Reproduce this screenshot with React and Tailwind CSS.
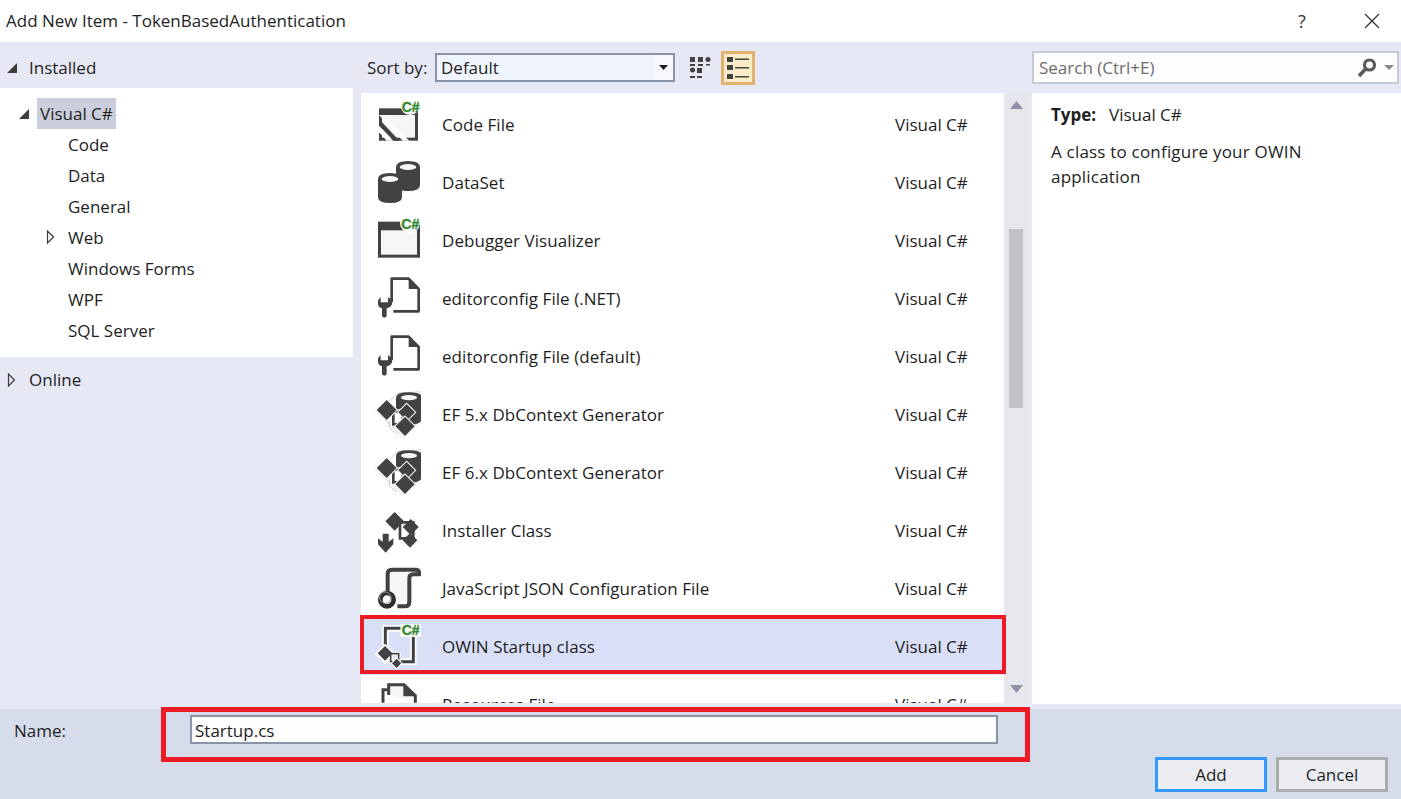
import React from 'react';

const font = { fontFamily: '"Open Sans", "Noto Sans", sans-serif' };

const items = [
  { name: 'Code File', icon: 'code' },
  { name: 'DataSet', icon: 'dataset' },
  { name: 'Debugger Visualizer', icon: 'debugger' },
  { name: 'editorconfig File (.NET)', icon: 'editor' },
  { name: 'editorconfig File (default)', icon: 'editor' },
  { name: 'EF 5.x DbContext Generator', icon: 'ef' },
  { name: 'EF 6.x DbContext Generator', icon: 'ef' },
  { name: 'Installer Class', icon: 'installer' },
  { name: 'JavaScript JSON Configuration File', icon: 'json' },
  { name: 'OWIN Startup class', icon: 'owin', selected: true },
  { name: 'Resources File', icon: 'resources' },
];

const treeItems = ['Code', 'Data', 'General', 'Web', 'Windows Forms', 'WPF', 'SQL Server'];

const dark = '#424242';
const light = '#f6f6f6';

const CSharp = ({ x, y }) => (
  <text x={x} y={y} fontFamily="Liberation Sans" fontWeight="bold" fontSize="42" fill="#388a34" stroke="#388a34" strokeWidth="1.2">C#</text>
);

const Diamond = ({ cx, cy, r, halo }) => (
  <polygon
    points={`${cx},${cy - r} ${cx + r},${cy} ${cx},${cy + r} ${cx - r},${cy}`}
    fill={dark}
    stroke={halo ? '#ffffff' : 'none'}
    strokeWidth={halo ? 6 : 0}
    paintOrder="stroke"
  />
);

const Wrench = () => (
  <path
    d="M54 106 L54 94 L62 84 L62 100 L84 100 L84 84 L96 94 L96 106 Q92 116 80 118 L80 142 Q73 150 66 142 L66 118 Q56 116 54 106 Z"
    fill={dark}
  />
);

const ItemIcon = ({ type }) => {
  let body = null;
  if (type === 'code') {
    body = (
      <>
        <rect x="57" y="40" width="117" height="97" fill={dark} />
        <rect x="66" y="60" width="99" height="68" fill={light} />
        <polygon points="57,60 66,60 148,137 128,137" fill="#ffffff" />
        <polygon points="57,72 118,137 100,137 57,92" fill={dark} />
        <polygon points="57,92 100,137 80,137 57,112" fill="#ffffff" />
        <circle cx="150" cy="32" r="28" fill="#ffffff" />
        <CSharp x={125} y={52} />
      </>
    );
  } else if (type === 'dataset') {
    body = (
      <>
        <path d="M108 42 Q108 24 144 24 Q180 24 180 42 L180 96 Q180 114 144 114 Q125 114 120 108 L108 60 Z" fill={dark} />
        <ellipse cx="144" cy="42" rx="25" ry="9" fill={light} />
        <path d="M54 78 Q54 60 90 60 Q126 60 126 78 L126 132 Q126 150 90 150 Q54 150 54 132 Z" fill={dark} />
        <ellipse cx="90" cy="78" rx="25" ry="9" fill={light} />
      </>
    );
  } else if (type === 'debugger') {
    body = (
      <>
        <rect x="54" y="32" width="126" height="108" fill={dark} />
        <rect x="63" y="58" width="108" height="73" fill={light} />
        <circle cx="150" cy="36" r="30" fill="#ffffff" />
        <CSharp x={124} y={54} />
      </>
    );
  } else if (type === 'editor') {
    body = (
      <>
        <path d="M95 100 L95 29 L146 29 L176 60 L176 127 L100 127" fill="none" stroke={dark} strokeWidth="8" strokeLinejoin="round" />
        <polygon points="146,29 146,60 176,60" fill={dark} />
        <Wrench />
      </>
    );
  } else if (type === 'ef') {
    body = (
      <>
        <path d="M96 42 L112 24 L186 20 L188 100 L132 156 L104 134 L46 76 Z" fill="#ffffff" stroke="#d8d8d8" strokeWidth="3" />
        <path d="M108 38 Q108 22 147 22 Q186 22 186 38 L186 100 Q186 116 156 120 L108 70 Z" fill={dark} />
        <ellipse cx="147" cy="38" rx="24" ry="8" fill={light} />
        <path d="M100 80 L128 80 L128 118 L100 118 Z" fill="none" stroke="#ffffff" strokeWidth="14" />
        <path d="M100 80 L128 80 L128 118 L100 118 Z" fill="none" stroke={dark} strokeWidth="8" />
        <Diamond cx={80} cy={75} r={30} halo />
        <Diamond cx={140} cy={82} r={25} halo />
        <Diamond cx={135} cy={124} r={29} halo />
        <path d="M88 106 L88 128 L110 148" fill="none" stroke="#c8c8c8" strokeWidth="3" />
      </>
    );
  } else if (type === 'installer') {
    body = (
      <>
        <path d="M120 64 L160 64 L160 112 L120 112 Z" fill="none" stroke={dark} strokeWidth="8" />
        <Diamond cx={104} cy={61} r={28} />
        <Diamond cx={152} cy={78} r={24} />
        <Diamond cx={150} cy={118} r={22} />
        <polygon points="68,98 86,98 86,122 100,112 100,130 77,155 54,130 54,112 68,122" fill={dark} />
      </>
    );
  } else if (type === 'json') {
    body = (
      <>
        <rect x="88" y="36" width="56" height="96" fill={light} />
        <path d="M83 102 L83 44 Q83 32 96 32 L168 32 Q178 32 178 46 L160 46 Q148 46 148 58 L148 128 Q148 142 134 142 L112 142" fill="none" stroke={dark} strokeWidth="12" strokeLinejoin="round" />
        <circle cx="81" cy="122" r="20" fill="#ffffff" stroke="#2e2e2e" strokeWidth="14" />
        <circle cx="76" cy="116" r="17" fill="none" stroke="#9a9a9a" strokeWidth="3" />
      </>
    );
  } else if (type === 'owin') {
    body = (
      <>
        <path d="M76 90 L76 34 L160 34 L160 134 L100 134" fill="none" stroke="#ffffff" strokeWidth="20" />
        <path d="M76 88 L76 34 L122 34 M160 60 L160 134 L112 134" fill="none" stroke={dark} strokeWidth="9" />
        <rect x="122" y="21" width="66" height="38" fill="#ffffff" />
        <CSharp x={125} y={54} />
        <polygon points="75,80 106,110 76,142 44,110" fill="#ffffff" />
        <rect x="92" y="110" width="24" height="24" fill="none" stroke="#ffffff" strokeWidth="11" />
        <rect x="92" y="110" width="24" height="24" fill="none" stroke={dark} strokeWidth="5" />
        <Diamond cx={75} cy={109} r={22} />
        <Diamond cx={110} cy={139} r={14} halo />
      </>
    );
  } else if (type === 'resources') {
    body = (
      <>
        <path d="M69 83 L69 44 L88 44" fill="none" stroke={dark} strokeWidth="9" />
        <path d="M86 60 L86 29 L132 29 L166 62 L166 83" fill={light} stroke={dark} strokeWidth="9" />
        <polygon points="130,29 130,64 166,64" fill={dark} />
      </>
    );
  }
  return (
    <svg width="60" height="58" viewBox="3 0 180 174" className="shrink-0">
      {body}
    </svg>
  );
};

const Triangle = ({ open, className }) => (
  <svg width="12" height="14" viewBox="0 0 12 14" className={className}>
    {open ? (
      <polygon points="11,2 11,12 1,12" fill="#3c3c3c" />
    ) : (
      <polygon points="2.5,1 8.5,7 2.5,13" fill="none" stroke="#3c3c3c" strokeWidth="1.2" />
    )}
  </svg>
);

const GridViewIcon = () => (
  <svg width="22" height="24" viewBox="0 0 22 24" fill="#424242">
    <rect x="1" y="1" width="5" height="5" />
    <rect x="9" y="1" width="5" height="5" />
    <circle cx="19" cy="3.5" r="2.5" />
    <rect x="1" y="8" width="5" height="2" />
    <rect x="9" y="8" width="5" height="2" />
    <rect x="17" y="8" width="4" height="1.5" />
    <circle cx="3.5" cy="14" r="2.5" />
    <rect x="8" y="12" width="5" height="5" />
    <rect x="1" y="20" width="5" height="2" />
    <rect x="8" y="20" width="5" height="2" />
  </svg>
);

const ListViewIcon = () => (
  <svg width="24" height="24" viewBox="0 0 24 24" fill="#424242">
    <rect x="1" y="1" width="6" height="5" />
    <rect x="9" y="2.5" width="14" height="1.5" />
    <rect x="1" y="9" width="6" height="5" />
    <rect x="9" y="11" width="14" height="1.5" />
    <rect x="1" y="18" width="6" height="5" />
    <rect x="9" y="20" width="14" height="1.5" />
  </svg>
);

const App = () => {
  return (
    <div className="w-[1401px] h-[799px] flex flex-col bg-[#e6e9f5] text-[17px] text-[#1e1e1e] overflow-hidden" style={font}>
      {/* title bar */}
      <div className="h-[42px] shrink-0 bg-white flex items-center pl-[6px]">
        <span className="flex-1">Add New Item - TokenBasedAuthentication</span>
        <span className="w-[14px] text-[18px] text-[#333333]">?</span>
        <svg width="16" height="16" viewBox="0 0 16 16" className="ml-[52px] mr-[21px]">
          <path d="M1 1 L15 15 M15 1 L1 15" stroke="#333333" strokeWidth="1.3" />
        </svg>
      </div>

      <div className="h-[667px] shrink-0 flex">
        {/* left tree */}
        <div className="w-[361px] shrink-0 flex flex-col">
          <div className="h-[46px] flex items-center pl-[6px] pt-[6px] gap-[11px]">
            <Triangle open />
            <span>Installed</span>
          </div>
          <div className="w-[353px] h-[269px] bg-white pt-[10px]">
            <div className="h-[31px] flex items-center pl-[18px]">
              <Triangle open />
              <span className="ml-[7px] h-[31px] px-[3px] flex items-center bg-[#cbcedc]">Visual C#</span>
            </div>
            {treeItems.map((item) => (
              <div key={item} className="relative h-[31px] flex items-center pl-[68px]">
                {item === 'Web' && <Triangle className="absolute left-[45px] top-[8px]" />}
                {item}
              </div>
            ))}
          </div>
          <div className="h-[46px] flex items-center pl-[6px] gap-[11px]">
            <Triangle />
            <span>Online</span>
          </div>
        </div>

        {/* middle list */}
        <div className="w-[671px] shrink-0 flex flex-col">
          <div className="h-[51px] shrink-0 flex items-center pl-[6px]">
            <span className="w-[68px]">Sort by:</span>
            <div className="w-[240px] h-[29px] border-2 border-[#8a94a8] bg-[#f0f4fd] flex items-center pl-[4px]">
              <span className="flex-1">Default</span>
              <div className="w-[20px] h-full bg-[#f6f8fd] flex items-center justify-center">
                <svg width="9" height="5" viewBox="0 0 9 5"><polygon points="0,0 9,0 4.5,5" fill="#1e1e1e" /></svg>
              </div>
            </div>
            <div className="ml-[14px] w-[22px] flex">
              <GridViewIcon />
            </div>
            <div className="ml-[10px] w-[34px] h-[34px] border-[3px] border-[#e0b46c] bg-[#fdecc9] flex items-center justify-center">
              <ListViewIcon />
            </div>
          </div>
          <div className="relative h-[610px] flex">
            <div className="w-[643px] h-full bg-white pt-[2px] overflow-hidden">
              {items.map((item) => (
                <div key={item.name} className={`h-[58px] flex items-center ${item.selected ? 'bg-[#d9dff7]' : ''}`}>
                  <ItemIcon type={item.icon} />
                  <span className="ml-[21px] pt-[1px] w-[453px] tracking-[0.05px] whitespace-nowrap">{item.name}</span>
                  <span className="pt-[1px]">Visual C#</span>
                </div>
              ))}
            </div>
            <div className="w-[26px] h-full bg-[#e6e6ec] flex flex-col items-center pr-[2px]">
              <div className="h-[136px] w-full flex justify-center pt-[8px]">
                <svg width="13" height="8" viewBox="0 0 13 8"><polygon points="0,8 13,8 6.5,0" fill="#8e92a2" /></svg>
              </div>
              <div className="w-[14px] h-[179px] bg-[#c2c3c9]" />
              <div className="flex-1 w-full flex justify-center items-end pb-[10px]">
                <svg width="13" height="8" viewBox="0 0 13 8"><polygon points="0,0 13,0 6.5,8" fill="#8e92a2" /></svg>
              </div>
            </div>
            <div className="absolute left-[-1px] top-[522px] w-[646px] h-[59px] border-4 border-[#ed1c24]" />
          </div>
        </div>

        {/* right details */}
        <div className="flex-1 flex flex-col">
          <div className="h-[51px] shrink-0 flex items-center justify-end pr-[3px]">
            <div className="w-[367px] h-[33px] border-2 border-[#c4cad8] bg-[#fdfdfd] flex items-center pl-[5px] pr-[3px] text-[#6d6d6d]">
              <span className="flex-1">Search (Ctrl+E)</span>
              <svg width="22" height="22" viewBox="0 0 22 22">
                <circle cx="13.5" cy="8" r="5" fill="none" stroke="#5a5a5a" strokeWidth="3.2" />
                <path d="M10 11.5 L3 19" stroke="#5a5a5a" strokeWidth="3.6" />
              </svg>
              <svg width="10" height="5" viewBox="0 0 10 5" className="ml-[6px]"><polygon points="0,0 10,0 5,5" fill="#8a8a8a" /></svg>
            </div>
          </div>
          <div className="h-[611px] bg-white pl-[19px] pt-[8px]">
            <div className="h-[28px] flex items-center">
              <span className="font-bold w-[58px]">Type:</span>
              <span>Visual C#</span>
            </div>
            <p className="mt-[10px] w-[290px] leading-[25px] tracking-[0.2px]">A class to configure your OWIN application</p>
          </div>
        </div>
      </div>

      {/* footer */}
      <div className="h-[90px] shrink-0 bg-[#d6dcea] flex flex-col relative">
        <div className="h-[48px] shrink-0 flex items-start pt-[6px] pl-[14px]">
          <span className="w-[176px] h-[29px] pt-[2px] flex items-center">Name:</span>
          <div className="w-[808px] h-[29px] border-2 border-[#8a94a8] bg-[#fdfdfd] flex items-center pl-[3px] pt-[2px]">Startup.cs</div>
        </div>
        <div className="flex justify-end gap-[9px] pr-[13px]">
          <button className="w-[112px] h-[35px] border-[3px] border-[#3399ff] bg-[#ecedf2]">Add</button>
          <button className="w-[112px] h-[35px] border-[3px] border-[#adadad] bg-[#ecedf2]">Cancel</button>
        </div>
        <div className="absolute left-[161px] top-[-2px] w-[869px] h-[55px] border-[5px] border-[#ed1c24]" />
      </div>
    </div>
  );
};

export default App;
